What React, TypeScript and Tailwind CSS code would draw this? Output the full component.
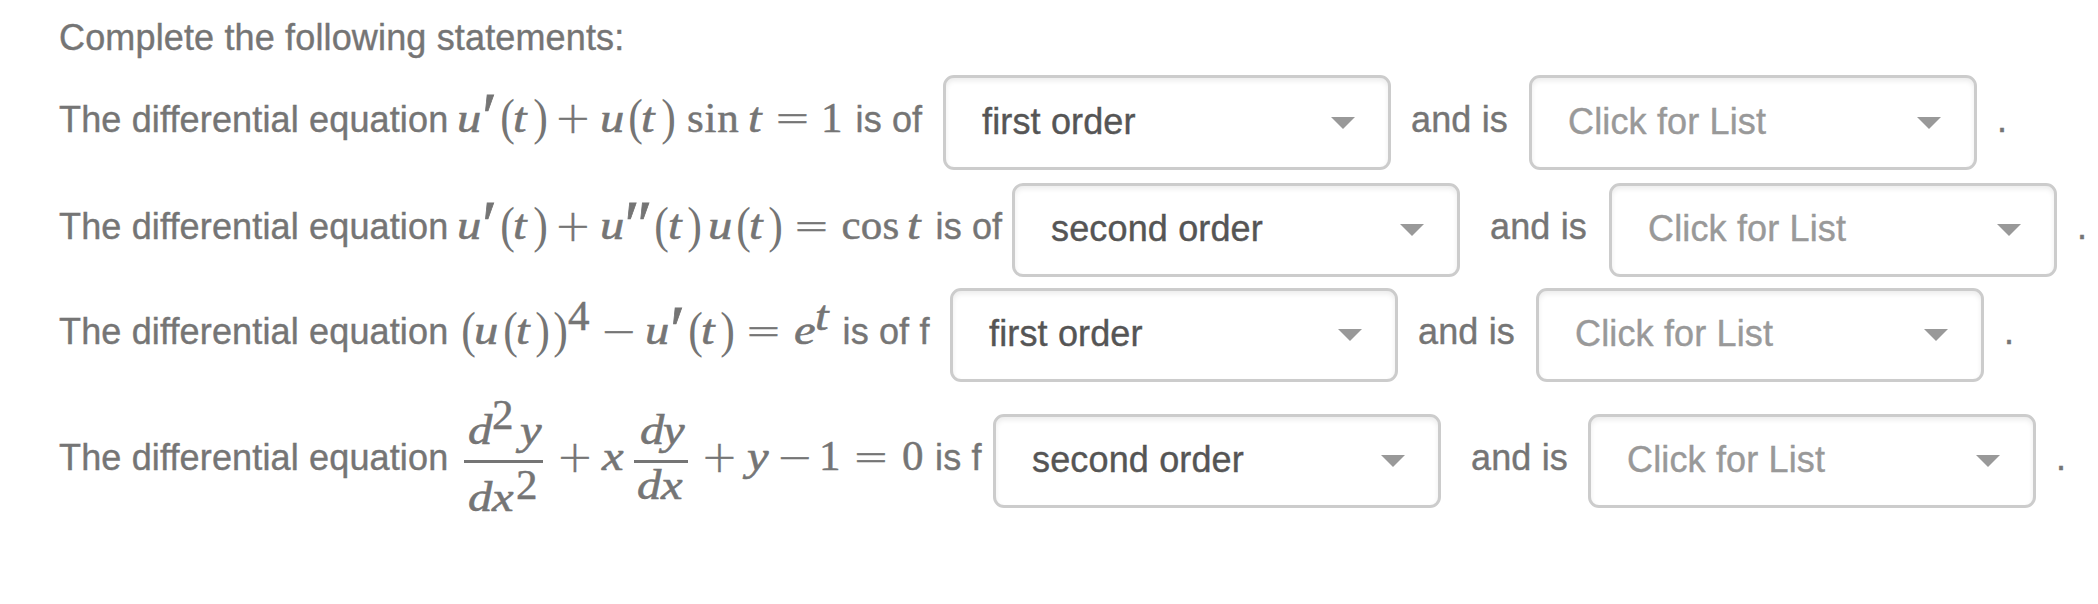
import type { ReactNode } from 'react'
import clsx from 'clsx'

type CellProps = { className?: string; children: ReactNode }

// Math italic variable
function V({ className, children }: CellProps) {
  return (
    <span className={clsx("h-10 shrink-0 whitespace-nowrap font-['Liberation_Serif',serif] text-[43px] italic leading-10", className)}>
      <span className="inline-block origin-left scale-x-[1.13] [-webkit-text-stroke:0.6px_#757575]">{children}</span>
    </span>
  )
}

// Upright digits and function names
function N({ className, children }: CellProps) {
  return (
    <span className={clsx("h-10 shrink-0 whitespace-nowrap font-['Liberation_Serif',serif] text-[43px] leading-10 [-webkit-text-stroke:0.5px_#757575]", className)}>
      {children}
    </span>
  )
}

// Parentheses are a little taller than the letters
function P({ className, children }: CellProps) {
  return (
    <span className={clsx("mt-[22px] h-10 shrink-0 font-['Liberation_Serif',serif] text-[51px] leading-10", className)}>
      <span className="inline-block scale-x-[0.86]">{children}</span>
    </span>
  )
}

// Binary operators and relations
function Op({ className, children }: CellProps) {
  return (
    <span className={clsx("mt-[23px] h-10 shrink-0 font-['DejaVu_Sans',sans-serif] text-[44px] font-extralight leading-10 [-webkit-text-stroke:0.4px_#757575]", className)}>
      {children}
    </span>
  )
}

function Prime({ className, children }: CellProps) {
  return (
    <span className={clsx("mt-[21px] h-10 shrink-0 whitespace-nowrap -indent-[5px] font-['Liberation_Serif',serif] text-[68px] italic leading-10 [-webkit-text-stroke:0.8px_#757575]", className)}>
      {children}
    </span>
  )
}

function Label({ className, children }: CellProps) {
  return (
    <span className={clsx('h-10 shrink-0 whitespace-pre [-webkit-text-stroke:0.4px_#757575]', className)}>
      {children}
    </span>
  )
}

function Select({ value, tall }: { value?: string; tall?: boolean }) {
  return (
    <button
      className={clsx(
        'flex w-[448px] shrink-0 items-start justify-between rounded-[11px] border-[3px] border-[#cccccc] bg-white pl-9 pr-[33px] text-left shadow-[inset_0_3px_5px_rgba(0,0,0,0.075)]',
        tall ? 'h-[95px]' : 'h-[94px]',
      )}
    >
      <span
        className={clsx(
          'h-10',
          tall ? 'mt-6' : 'mt-[23px]',
          value
            ? 'text-[#555555] [-webkit-text-stroke:0.4px_#555555]'
            : 'text-[#999999] [-webkit-text-stroke:0.4px_#999999]',
        )}
      >
        {value ?? 'Click for List'}
      </span>
      <svg className={clsx('h-3 w-6', tall ? 'mt-[39px]' : 'mt-[38px]')} viewBox="0 0 24 12" fill="#999999">
        <path d="M0 0h24L12 12z" />
      </svg>
    </button>
  )
}

type StatementProps = {
  className: string
  gap: string
  value: string
  tall?: boolean
  children: ReactNode
}

function Statement({ className, gap, value, tall, children }: StatementProps) {
  const top = tall ? 'mt-[25px]' : 'mt-6'
  return (
    <div className={clsx('flex items-start', className)}>
      <Label className={clsx('w-[397px]', top)}>The differential equation</Label>
      {children}
      <Select value={value} tall={tall} />
      <Label className={clsx(gap, top)}>and is</Label>
      <Select tall={tall} />
      <Label className={clsx('pl-5', top)}>.</Label>
    </div>
  )
}

export default function App() {
  return (
    <main className="h-[604px] w-[2098px] overflow-hidden bg-white pl-[59px] pt-[18px] font-['Liberation_Sans',Arial,sans-serif] text-[36px] leading-10 tracking-[0.15px] text-[#757575]">
      <p className="h-[57px] [-webkit-text-stroke:0.4px_#757575]">Complete the following statements:</p>

      <Statement className="h-[108px]" gap="w-[138px] pl-5" value="first order" tall>
        <V className="mt-[23px] w-[27px] pl-px">u</V>
        <Prime className="w-[16px]">′</Prime>
        <P className="w-[13.5px]">(</P>
        <V className="mt-[23px] w-[19.5px]">t</V>
        <P className="w-[22.5px]">)</P>
        <Op className="w-[45px]">+</Op>
        <V className="mt-[23px] w-[27.5px]">u</V>
        <P className="w-[14px]">(</P>
        <V className="mt-[23px] w-[19px]">t</V>
        <P className="w-[27px]">)</P>
        <N className="mt-[23px] w-[60.5px] tracking-[0.8px]">sin</N>
        <V className="mt-[23px] w-[26.5px]">t</V>
        <Op className="w-[47px]">=</Op>
        <N className="mt-[23px] w-[34.5px]">1</N>
        <Label className="mt-[25px] w-[87.5px]">is of</Label>
      </Statement>

      <Statement className="h-[105px]" gap="w-[149px] pl-[30px]" value="second order">
        <V className="mt-[22px] w-[27px] pl-px">u</V>
        <Prime className="w-[16px]">′</Prime>
        <P className="w-[13.5px]">(</P>
        <V className="mt-[22px] w-[19.5px]">t</V>
        <P className="w-[22.5px]">)</P>
        <Op className="w-[45px]">+</Op>
        <V className="mt-[22px] w-[25.5px]">u</V>
        <Prime className="w-[28px]">″</Prime>
        <P className="w-[14.5px]">(</P>
        <V className="mt-[22px] w-[18.5px]">t</V>
        <P className="w-[21.5px]">)</P>
        <V className="mt-[22px] w-[27.5px]">u</V>
        <P className="w-[14px]">(</P>
        <V className="mt-[22px] w-[18px]">t</V>
        <P className="w-[26px]">)</P>
        <Op className="w-[48.5px]">=</Op>
        <N className="mt-[22px] w-[65px]">cos</N>
        <V className="mt-[22px] w-[29px]">t</V>
        <Label className="mt-6 w-[76.5px]">is of</Label>
      </Statement>

      <Statement className="h-[126px]" gap="w-[138px] pl-5" value="first order">
        <P className="w-[18px] pl-1">(</P>
        <V className="mt-[22px] w-[27.5px]">u</V>
        <P className="w-[14.5px]">(</P>
        <V className="mt-[22px] w-[18px]">t</V>
        <P className="w-[17.5px]">)</P>
        <P className="w-[16.5px]">)</P>
        <N className="mt-[8px] w-[32.5px]">4</N>
        <Op className="w-[44px]">−</Op>
        <V className="mt-[22px] w-[26.5px]">u</V>
        <Prime className="w-[15.5px]">′</Prime>
        <P className="w-[14.5px]">(</P>
        <V className="mt-[22px] w-[18px]">t</V>
        <P className="w-[26px]">)</P>
        <Op className="w-[48.5px]">=</Op>
        <V className="mt-[22px] w-[21.5px]">e</V>
        <V className="mt-[8px] w-[27.5px]">t</V>
        <Label className="mt-6 w-[107.5px]">is of f</Label>
      </Statement>

      <Statement className="h-[95px]" gap="w-[147px] pl-[30px]" value="second order">
        <div className="-mt-1 ml-2 flex w-[79px] shrink-0 flex-col">
          <div className="flex h-10 pl-1">
            <V className="w-[24px]">d</V>
            <N className="-mt-[15px] w-[28px]">2</N>
            <V>y</V>
          </div>
          <div className="mt-[10px] h-[3px] bg-[#757575]" />
          <div className="mt-[14px] flex h-10 pl-1">
            <V className="w-[24px]">d</V>
            <V className="w-[24px]">x</V>
            <N className="-mt-3">2</N>
          </div>
        </div>
        <Op className="ml-[13.5px] w-[45.5px]">+</Op>
        <V className="mt-[22px] w-[32px]">x</V>
        <div className="-mt-1 flex w-[54px] shrink-0 flex-col">
          <div className="flex h-10 pl-1.5">
            <V className="w-[23px]">d</V>
            <V>y</V>
          </div>
          <div className="mt-[10px] h-[3px] bg-[#757575]" />
          <div className="mt-0.5 flex h-10 pl-[3px]">
            <V className="w-[24px]">d</V>
            <V>x</V>
          </div>
        </div>
        <Op className="ml-[13px] w-[46px]">+</Op>
        <V className="mt-[22px] w-[29.5px]">y</V>
        <Op className="w-[42.5px]">−</Op>
        <N className="mt-[22px] w-[33.5px]">1</N>
        <Op className="w-[49.5px]">=</Op>
        <N className="mt-[22px] w-[33px]">0</N>
        <Label className="mt-6 w-[58px]">is f</Label>
      </Statement>
    </main>
  )
}
